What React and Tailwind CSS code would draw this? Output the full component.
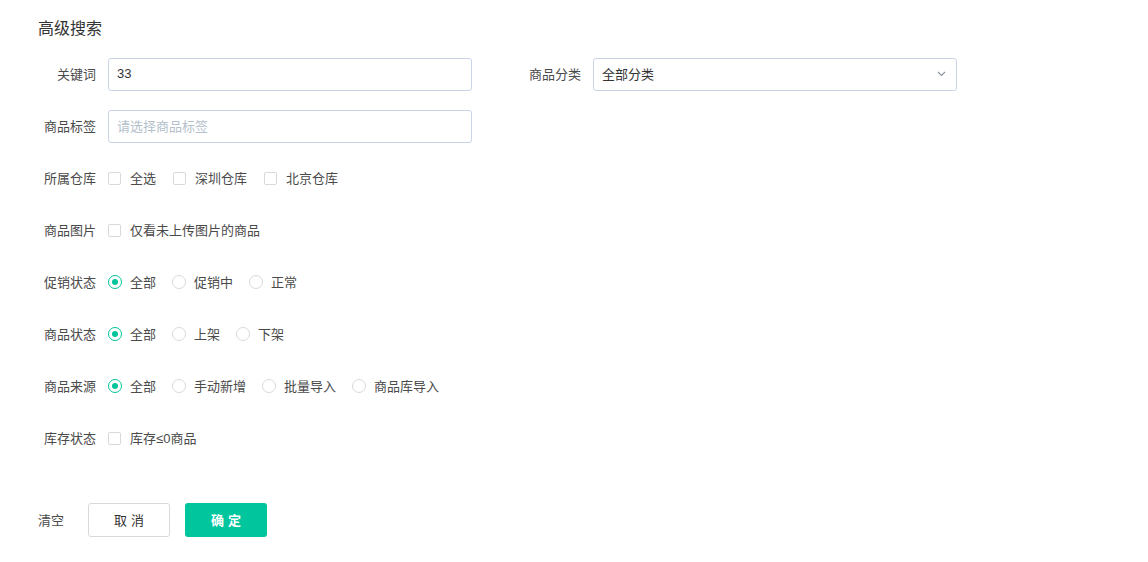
import React from 'react';

const font = { fontFamily: '"Noto Sans CJK SC", "Noto Sans", sans-serif' };

function Label({ children }) {
  return <div className="w-[58px] shrink-0 text-right text-[13px] text-[#4a4a4a]">{children}</div>;
}

function Checkbox({ label }) {
  return (
    <label className="flex items-center gap-[9px] text-[13px] text-[#4a4a4a]">
      <span className="w-[13px] h-[13px] border border-[#d9d9d9] rounded-[2px] bg-white" />
      {label}
    </label>
  );
}

function Radio({ label, checked }) {
  return (
    <label className="flex items-center gap-[8px] text-[13px] text-[#4a4a4a]">
      <span
        className={
          'w-[14px] h-[14px] rounded-full border flex items-center justify-center bg-white ' +
          (checked ? 'border-[#00c49a]' : 'border-[#d9d9d9]')
        }
      >
        {checked && <span className="w-[6px] h-[6px] rounded-full bg-[#00c49a]" />}
      </span>
      {label}
    </label>
  );
}

function Row({ label, children }) {
  return (
    <div className="h-[52px] flex items-center gap-[12px]">
      <Label>{label}</Label>
      {children}
    </div>
  );
}

export default function App() {
  return (
    <div className="w-[1148px] h-[562px] bg-white pl-[38px] pt-[17px]" style={font}>
      <h2 className="text-[16px] leading-[20px] text-[#333]">高级搜索</h2>
      <div className="mt-[11px]">
        <div className="h-[52px] flex items-center">
          <div className="flex items-center gap-[12px]">
            <Label>关键词</Label>
            <div className="w-[364px] h-[33px] border border-[#c9d5e6] rounded-[3px] px-[8px] flex items-center text-[13px] text-[#333]">
              <span style={{ fontFamily: '"Liberation Sans", sans-serif' }}>33</span>
            </div>
          </div>
          <div className="flex items-center gap-[12px] ml-[51px]">
            <Label>商品分类</Label>
            <div className="w-[364px] h-[33px] border border-[#c9d5e6] rounded-[3px] pl-[8px] pr-[10px] flex items-center justify-between text-[13px] text-[#333]">
              全部分类
              <svg width="9" height="6" viewBox="0 0 9 6" fill="none">
                <path d="M1 1l3.5 3.5L8 1" stroke="#8a93a0" strokeWidth="1.1" />
              </svg>
            </div>
          </div>
        </div>
        <Row label="商品标签">
          <div className="w-[364px] h-[33px] border border-[#c9d5e6] rounded-[3px] px-[8px] flex items-center text-[13px] text-[#b4bfcc]">
            请选择商品标签
          </div>
        </Row>
        <Row label="所属仓库">
          <div className="flex items-center gap-[17px]">
            <Checkbox label="全选" />
            <Checkbox label="深圳仓库" />
            <Checkbox label="北京仓库" />
          </div>
        </Row>
        <Row label="商品图片">
          <Checkbox label="仅看未上传图片的商品" />
        </Row>
        <Row label="促销状态">
          <div className="flex items-center gap-[16px]">
            <Radio label="全部" checked />
            <Radio label="促销中" />
            <Radio label="正常" />
          </div>
        </Row>
        <Row label="商品状态">
          <div className="flex items-center gap-[16px]">
            <Radio label="全部" checked />
            <Radio label="上架" />
            <Radio label="下架" />
          </div>
        </Row>
        <Row label="商品来源">
          <div className="flex items-center gap-[16px]">
            <Radio label="全部" checked />
            <Radio label="手动新增" />
            <Radio label="批量导入" />
            <Radio label="商品库导入" />
          </div>
        </Row>
        <Row label="库存状态">
          <Checkbox
            label={
              <span>
                库存<span style={{ fontFamily: '"Liberation Sans", sans-serif' }}>≤0</span>商品
              </span>
            }
          />
        </Row>
      </div>
      <div className="mt-[39px] flex items-center">
        <span className="text-[13px] text-[#4a4a4a] mr-[24px]">清空</span>
        <button className="w-[82px] h-[34px] border border-[#d9d9d9] rounded-[3px] bg-white text-[13px] text-[#333] tracking-[4px] pl-[4px]">
          取消
        </button>
        <button className="ml-[15px] w-[82px] h-[34px] rounded-[3px] bg-[#00c59d] text-[13px] font-bold text-white tracking-[4px] pl-[4px]">
          确定
        </button>
      </div>
    </div>
  );
}
